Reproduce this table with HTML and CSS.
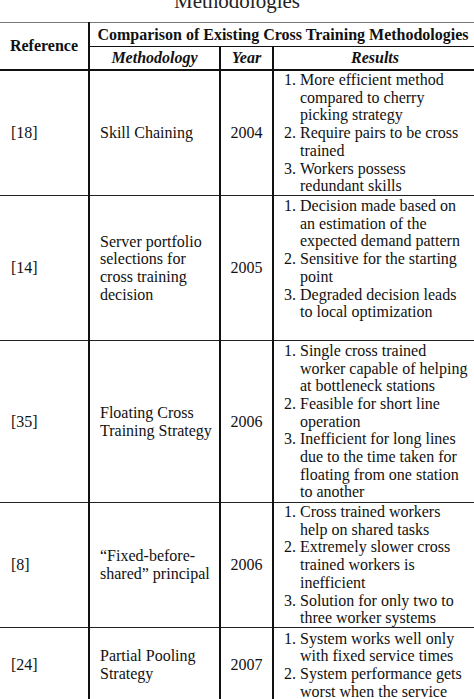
FILE: index.html
```html
<!DOCTYPE html>
<html>
<head>
<meta charset="utf-8">
<link rel="stylesheet" href="styles.css">
</head>
<body>
<div class="title">Methodologies</div>
<table class="tbl">
  <colgroup>
    <col class="c-ref">
    <col class="c-meth">
    <col class="c-year">
    <col class="c-res">
  </colgroup>
  <thead>
    <tr class="h1">
      <th rowspan="2" class="ref-h">Reference</th>
      <th colspan="3" class="comp-h">Comparison of Existing Cross Training Methodologies</th>
    </tr>
    <tr class="h2">
      <th class="sub">Methodology</th>
      <th class="sub">Year</th>
      <th class="sub">Results</th>
    </tr>
  </thead>
  <tbody>
    <tr class="r1">
      <td class="ref">[18]</td>
      <td class="meth">Skill Chaining</td>
      <td class="year">2004</td>
      <td class="res"><ol>
        <li>More efficient method<br>compared to cherry<br>picking strategy</li>
        <li>Require pairs to be cross<br>trained</li>
        <li>Workers possess<br>redundant skills</li>
      </ol></td>
    </tr>
    <tr class="r2">
      <td class="ref">[14]</td>
      <td class="meth">Server portfolio selections for cross training decision</td>
      <td class="year">2005</td>
      <td class="res res-top"><ol>
        <li>Decision made based on<br>an estimation of the<br>expected demand pattern</li>
        <li>Sensitive for the starting<br>point</li>
        <li>Degraded decision leads<br>to local optimization</li>
      </ol></td>
    </tr>
    <tr class="r3">
      <td class="ref">[35]</td>
      <td class="meth">Floating Cross Training Strategy</td>
      <td class="year">2006</td>
      <td class="res"><ol>
        <li>Single cross trained<br>worker capable of helping<br>at bottleneck stations</li>
        <li>Feasible for short line<br>operation</li>
        <li>Inefficient for long lines<br>due to the time taken for<br>floating from one station<br>to another</li>
      </ol></td>
    </tr>
    <tr class="r4">
      <td class="ref">[8]</td>
      <td class="meth">“Fixed-before-shared” principal</td>
      <td class="year">2006</td>
      <td class="res"><ol>
        <li>Cross trained workers<br>help on shared tasks</li>
        <li>Extremely slower cross<br>trained workers is<br>inefficient</li>
        <li>Solution for only two to<br>three worker systems</li>
      </ol></td>
    </tr>
    <tr class="r5">
      <td class="ref">[24]</td>
      <td class="meth">Partial Pooling Strategy</td>
      <td class="year">2007</td>
      <td class="res"><ol>
        <li>System works well only<br>with fixed service times</li>
        <li>System performance gets<br>worst when the service</li>
      </ol></td>
    </tr>
  </tbody>
</table>
</body>
</html>
```

FILE: styles.css
```css
html, body {
  margin: 0;
  padding: 0;
  background: #ffffff;
}
body {
  font-family: "Liberation Serif", "Times New Roman", serif;
  color: #111;
  width: 474px;
  height: 699px;
  overflow: hidden;
}
.title {
  text-align: center;
  font-size: 21px;
  line-height: 22px;
  margin-top: -10px;
  height: 32px;
  color: #222;
}
.tbl {
  border-collapse: collapse;
  width: 478px;
  margin-left: -2px;
  table-layout: fixed;
  font-size: 16px;
}
.c-ref { width: 90px; }
.c-meth { width: 131px; }
.c-year { width: 53px; }
.c-res { width: 204px; }
.tbl th, .tbl td {
  border-left: 2px solid #111;
  border-right: 2px solid #111;
  padding: 0;
}
.h1 th {
  border-top: 1px solid #777;
  height: 23px;
  font-weight: bold;
  font-size: 16px;
  line-height: 18px;
}
.ref-h {
  border-bottom: 2px solid #111;
  text-align: center;
  vertical-align: middle;
}
.comp-h {
  border-bottom: 1px solid #111;
  text-align: center;
  white-space: nowrap;
  font-size: 15.5px;
}
.h2 th {
  border-bottom: 2px solid #111;
  height: 22px;
  font-weight: bold;
  font-style: italic;
  text-align: center;
  line-height: 18px;
}
.tbl td {
  border-bottom: 1px solid #222;
  vertical-align: middle;
  line-height: 17.7px;
}
.ref {
  padding-left: 11px !important;
}
.meth {
  padding-left: 10px !important;
  padding-right: 4px !important;
}
.year {
  text-align: center;
}
.res {
  padding-left: 10px !important;
  white-space: nowrap;
}
.res-top {
  vertical-align: top !important;
  padding-top: 1px !important;
}
.res ol {
  margin: 0;
  padding-left: 16px;
  list-style: none;
  counter-reset: item;
}
.res li {
  counter-increment: item;
  position: relative;
}
.res li::before {
  content: counter(item) ".";
  position: absolute;
  left: -16px;
}
.r1 td { height: 124px; }
.r2 td { height: 143px; }
.r3 td { height: 161px; }
.r4 td { height: 124px; }
.r5 td { height: 74px; }
```
